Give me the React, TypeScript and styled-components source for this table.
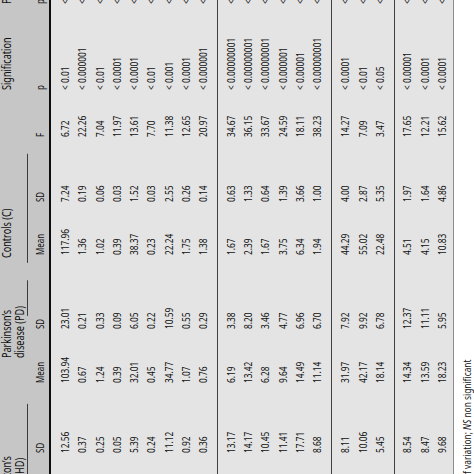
import React from "react";
import styled, { createGlobalStyle } from "styled-components";

/* The table is printed rotated a quarter turn counter-clockwise and squeezed
   along its text direction (condensed face). We lay it out upright in
   "pre" units and turn the whole sheet once. */
const S = 0.727; // horizontal condensing of the sheet
const H = 60; // part of the sheet that lies beyond the bottom edge of the picture
const VIEW = 474;
const pre = (du: number) => du / S;

// left edges of the columns, in picture pixels along the text direction
const U = [-40, 21, 91, 145, 219, 272, 337, 384, 470, 540];
const COLS = U.slice(1)
  .map((u, i) => `${pre(u - U[i]).toFixed(2)}px`)
  .join(" ");
const PAD = pre(U[0] + H);
const TOTAL = pre(U[U.length - 1] + H);

const GlobalStyle = createGlobalStyle`
  html, body { margin: 0; padding: 0; background: #ffffff; }
  #root { width: ${VIEW}px; height: ${VIEW}px; }
`;

const Viewport = styled.div`
  width: ${VIEW}px;
  height: ${VIEW}px;
  overflow: hidden;
  background: #ffffff;
`;

const Sheet = styled.div`
  width: ${TOTAL.toFixed(2)}px;
  transform-origin: 0 0;
  transform: translateY(${VIEW + H}px) rotate(-90deg) scaleX(${S});
  font-family: "Noto Sans", "Liberation Sans", sans-serif;
  color: #0f0f0f;
`;

const Header = styled.div`
  background: #c6c6c6;
  border-bottom: 2px solid #0e0e0e;
`;

const GroupRow = styled.div`
  display: grid;
  grid-template-columns: ${COLS};
  padding-left: ${PAD.toFixed(2)}px;
  height: 28px;
`;

const GroupCell = styled.div<{ $col: number; $span: number }>`
  grid-column: ${(p) => p.$col} / span ${(p) => p.$span};
  display: flex;
  flex-direction: column;
  justify-content: space-between;
  min-width: 0;
`;

const GroupTitle = styled.div<{ $offset: number }>`
  margin-left: ${(p) => pre(p.$offset).toFixed(2)}px;
  padding-top: 1px;
  font-size: 12.5px;
  line-height: 12.5px;
  white-space: nowrap;
`;

const GroupRule = styled.div<{ $offset: number; $width: number }>`
  margin-left: ${(p) => pre(p.$offset).toFixed(2)}px;
  width: ${(p) => pre(p.$width).toFixed(2)}px;
  height: 1px;
  background: #3c3c3c;
`;

const SubRow = styled.div`
  display: grid;
  grid-template-columns: ${COLS};
  padding-left: ${PAD.toFixed(2)}px;
  height: 21px;
  padding-top: 4px;
  box-sizing: border-box;
`;

const SubCell = styled.div`
  font-size: 11px;
  line-height: 15px;
  white-space: nowrap;
`;

const Body = styled.div`
  background: #e4e4e4;
  border-bottom: 1px solid #8c8c8c;
`;

const Section = styled.div<{ $top: number; $bottom: number; $rule: boolean }>`
  padding-top: ${(p) => p.$top}px;
  padding-bottom: ${(p) => p.$bottom}px;
  border-top: ${(p) => (p.$rule ? "1px solid #404040" : "none")};
`;

const DataRow = styled.div`
  display: grid;
  grid-template-columns: ${COLS};
  padding-left: ${PAD.toFixed(2)}px;
  height: 17.3px;
  font-size: 11.5px;
  line-height: 17.3px;
`;

const Cell = styled.div`
  white-space: nowrap;
`;

const Footnote = styled.div`
  padding: 6px 0 0 ${pre(12).toFixed(2)}px;
  font-size: 11.5px;
  line-height: 14px;
  white-space: nowrap;
  color: #141414;
`;

type Group = { col: number; span: number; title: React.ReactNode; offset: number; rule?: [number, number] };

const groups: Group[] = [
  { col: 1, span: 2, title: <>Huntington&rsquo;s<br />disease (HD)</>, offset: 3, rule: [0, 110] },
  { col: 3, span: 2, title: <>Parkinson&rsquo;s<br />disease (PD)</>, offset: 25, rule: [67, 36] },
  { col: 5, span: 2, title: "Controls (C)", offset: -3, rule: [-8, 109] },
  { col: 8, span: 1, title: "Signification", offset: 0 },
  { col: 9, span: 1, title: "Post hoc", offset: 0 },
];

const subHeads = ["Mean", "SD", "Mean", "SD", "Mean", "SD", "F", "p", "p"];

type Row = [string, string, string, string, string, string, string];

const sections: { top: number; bottom: number; rows: Row[] }[] = [
  {
    top: 5,
    bottom: 5,
    rows: [
      ["12.56", "103.94", "23.01", "117.96", "7.24", "6.72", "< 0.01"],
      ["0.37", "0.67", "0.21", "1.36", "0.19", "22.26", "< 0.000001"],
      ["0.25", "1.24", "0.33", "1.02", "0.06", "7.04", "< 0.01"],
      ["0.05", "0.39", "0.09", "0.39", "0.03", "11.97", "< 0.0001"],
      ["5.39", "32.01", "6.05", "38.37", "1.52", "13.61", "< 0.0001"],
      ["0.24", "0.45", "0.22", "0.23", "0.03", "7.70", "< 0.01"],
      ["11.12", "34.77", "10.59", "22.24", "2.55", "11.38", "< 0.001"],
      ["0.92", "1.07", "0.55", "1.75", "0.26", "12.65", "< 0.0001"],
      ["0.36", "0.76", "0.29", "1.38", "0.14", "20.97", "< 0.000001"],
    ],
  },
  {
    top: 4,
    bottom: 6,
    rows: [
      ["13.17", "6.19", "3.38", "1.67", "0.63", "34.67", "< 0.00000001"],
      ["14.17", "13.42", "8.20", "2.39", "1.33", "36.15", "< 0.00000001"],
      ["10.45", "6.28", "3.46", "1.67", "0.64", "33.67", "< 0.00000001"],
      ["11.41", "9.64", "4.77", "3.75", "1.39", "24.59", "< 0.000001"],
      ["17.71", "14.49", "6.96", "6.34", "3.66", "18.11", "< 0.00001"],
      ["8.68", "11.14", "6.70", "1.94", "1.00", "38.23", "< 0.00000001"],
    ],
  },
  {
    top: 4,
    bottom: 6,
    rows: [
      ["8.11", "31.97", "7.92", "44.29", "4.00", "14.27", "< 0.0001"],
      ["10.06", "42.17", "9.92", "55.02", "2.87", "7.09", "< 0.01"],
      ["5.45", "18.14", "6.78", "22.48", "5.35", "3.47", "< 0.05"],
    ],
  },
  {
    top: 3,
    bottom: 3,
    rows: [
      ["8.54", "14.34", "12.37", "4.51", "1.97", "17.65", "< 0.00001"],
      ["8.47", "13.59", "11.11", "4.15", "1.64", "12.21", "< 0.0001"],
      ["9.68", "18.23", "5.95", "10.83", "4.86", "15.62", "< 0.0001"],
    ],
  },
];

export default function App() {
  return (
    <>
      <GlobalStyle />
      <Viewport>
        <Sheet>
          <Header>
            <GroupRow>
              {groups.map((g, i) => (
                <GroupCell key={i} $col={g.col} $span={g.span}>
                  <GroupTitle $offset={g.offset}>{g.title}</GroupTitle>
                  {g.rule ? <GroupRule $offset={g.rule[0]} $width={g.rule[1]} /> : null}
                </GroupCell>
              ))}
            </GroupRow>
            <SubRow>
              {subHeads.map((s, i) => (
                <SubCell key={i}>{s}</SubCell>
              ))}
            </SubRow>
          </Header>
          <Body>
            {sections.map((sec, si) => (
              <Section key={si} $top={sec.top} $bottom={sec.bottom} $rule={si > 0}>
                {sec.rows.map((r, ri) => (
                  <DataRow key={ri}>
                    <Cell />
                    {r.map((v, ci) => (
                      <Cell key={ci}>{v}</Cell>
                    ))}
                    <Cell>&lt; 0.05</Cell>
                  </DataRow>
                ))}
              </Section>
            ))}
          </Body>
          <Footnote>
            coefficient of variation; <i>NS</i> non significant
          </Footnote>
        </Sheet>
      </Viewport>
    </>
  );
}
